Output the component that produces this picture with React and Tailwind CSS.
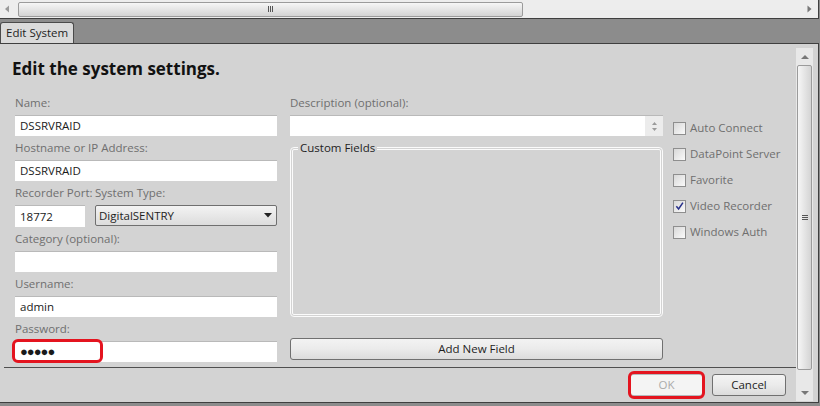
import React from 'react';

const labelCls = "h-[24px] flex items-center whitespace-nowrap text-[11.5px] text-[#6f6f6f] leading-none";
const inputCls = "h-[21px] bg-white border-t border-[#b9b9b9] flex items-center px-[5px] text-[11.5px] text-[#1a1a1a]";

const Field = ({ label, value, children, className = "" }) => (
  <div className={`flex flex-col ${className}`}>
    <div className={labelCls}>{label}</div>
    {children || <div className={inputCls}>{value}</div>}
  </div>
);

const Check = ({ label, checked }) => (
  <div className="h-[26px] flex items-center gap-[4px]">
    <div className="w-[13px] h-[13px] border border-[#8e8e8e] bg-gradient-to-br from-[#d8d8d8] to-[#fafafa] p-[1px] flex items-center justify-center">
      {checked && (
        <svg width="10" height="10" viewBox="0 0 10 10">
          <path d="M1.5 5.2 L4 8.2 L8.8 1.2" fill="none" stroke="#27308a" strokeWidth="1.7" />
        </svg>
      )}
    </div>
    <span className="text-[11.5px] text-[#6f6f6f]">{label}</span>
  </div>
);

const Btn = ({ children, disabled, className = "" }) => (
  <div
    className={`h-[22px] rounded-[3px] border flex items-center justify-center text-[11.5px] ${
      disabled
        ? "border-[#b5b9bc] bg-[#f4f4f4] text-[#ababab]"
        : "border-[#707070] bg-gradient-to-b from-[#f3f3f3] via-[#ebebeb] to-[#dcdcdc] text-[#1e1e1e]"
    } ${className}`}
  >
    {children}
  </div>
);

export default function App() {
  return (
    <div className="w-[820px] h-[406px] overflow-hidden bg-[#8c8c8c] flex flex-col font-['Open_Sans',sans-serif]">
      {/* horizontal scrollbar */}
      <div className="h-[19px] shrink-0 bg-[#ededed] border-b border-r border-[#3f3f3f] w-[819px] flex items-center pl-[4px] pr-[6px]">
        <svg width="6" height="8" viewBox="0 0 6 8" className="mr-[8px]">
          <path d="M5 0.5 L1 4 L5 7.5 Z" fill="#9a9a9a" />
        </svg>
        <div className="w-[505px] h-[15px] rounded-[2px] border border-[#9b9b9b] bg-gradient-to-b from-[#f6f6f6] to-[#d4d4d4] flex items-center justify-center">
          <div className="flex gap-[1px]">
            <div className="w-[1px] h-[6px] bg-[#555]" />
            <div className="w-[1px] h-[6px] bg-[#555]" />
            <div className="w-[1px] h-[6px] bg-[#555]" />
          </div>
        </div>
        <div className="flex-1" />
        <svg width="5" height="8" viewBox="0 0 5 8">
          <path d="M0.5 0.5 L4.5 4 L0.5 7.5 Z" fill="#777" />
        </svg>
      </div>

      {/* tab band */}
      <div className="h-[24px] shrink-0 flex items-end">
        <div className="w-[74px] h-[21px] bg-[#dadada] border border-b-0 border-[#4a4a4a] rounded-t-[3px] flex items-center pl-[5px] text-[11.5px] text-[#1e1e1e]">
          Edit System
        </div>
      </div>

      {/* panel */}
      <div className="h-[360px] shrink-0 w-[819px] bg-[#d3d3d3] border-t border-r border-b border-[#3f3f3f] flex">
        <div className="w-[796px] flex flex-col">
          <div className="h-[324px] border-b border-[#4f4f4f] ml-[4px] pl-[8px] flex flex-col">
            <div className="h-[47px] pt-[13px] text-[17px] font-bold text-[#111] leading-[23px]">
              Edit the system settings.
            </div>
            <div className="flex">
              {/* left column */}
              <div className="w-[262px] ml-[3px] flex flex-col">
                <Field label="Name:" value="DSSRVRAID" />
                <Field label="Hostname or IP Address:" value="DSSRVRAID" />
                <div className="flex">
                  <Field label="Recorder Port:" className="w-[70px]">
                    <div className={`${inputCls} h-[22px]`}>18772</div>
                  </Field>
                  <div className="ml-[10px] flex-1">
                    <Field label="System Type:">
                      <div className="h-[21px] rounded-[2px] border border-[#6f6f6f] bg-gradient-to-b from-[#f3f3f3] to-[#dcdcdc] flex items-center pl-[3px] pr-[4px] text-[11.5px] text-[#1e1e1e]">
                        <span className="flex-1">DigitalSENTRY</span>
                        <svg width="8" height="5" viewBox="0 0 8 5">
                          <path d="M0 0 L8 0 L4 4.5 Z" fill="#222" />
                        </svg>
                      </div>
                    </Field>
                  </div>
                </div>
                <Field label="Category (optional):" value="" />
                <Field label="Username:" value="admin" />
                <Field label="Password:">
                  <div className="relative">
                    <div className={`${inputCls} text-[13px] tracking-[-1px]`}>●●●●●</div>
                    <div className="absolute left-[-3px] top-[-2px] w-[91px] h-[24px] border-[3px] border-[#e4141f] rounded-[6px]" />
                  </div>
                </Field>
              </div>

              {/* middle column */}
              <div className="w-[373px] ml-[13px] flex flex-col">
                <Field label="Description (optional):">
                  <div className="h-[21px] bg-white border-t border-[#b9b9b9] flex">
                    <div className="flex-1" />
                    <div className="w-[18px] bg-[#ececec] flex flex-col items-center justify-center gap-[3px]">
                      <svg width="5" height="3" viewBox="0 0 5 3"><path d="M0 3 L2.5 0 L5 3 Z" fill="#9a9a9a" /></svg>
                      <svg width="5" height="3" viewBox="0 0 5 3"><path d="M0 0 L2.5 3 L5 0 Z" fill="#9a9a9a" /></svg>
                    </div>
                  </div>
                </Field>
                <fieldset className="mt-[5px] h-[176px] border-[3px] border-double border-[#fbfbfb] rounded-[4px] px-[5px]">
                  <legend className="px-[2px] text-[11.5px] text-[#1e1e1e] leading-[14px]">Custom Fields</legend>
                </fieldset>
                <Btn className="mt-[21px]">Add New Field</Btn>
              </div>

              {/* right column */}
              <div className="ml-[10px] pt-[24px] flex flex-col">
                <Check label="Auto Connect" />
                <Check label="DataPoint Server" />
                <Check label="Favorite" />
                <Check label="Video Recorder" checked />
                <Check label="Windows Auth" />
              </div>
            </div>
          </div>

          {/* footer */}
          <div className="flex-1 flex justify-end items-start pt-[6px] pr-[10px] gap-[9px]">
            <div className="relative">
              <Btn disabled className="w-[73px]">OK</Btn>
              <div className="absolute left-[-2px] top-[-3px] w-[77px] h-[28px] border-[3px] border-[#e4141f] rounded-[6px]" />
            </div>
            <Btn className="w-[74px]">Cancel</Btn>
          </div>
        </div>

        {/* vertical scrollbar */}
        <div className="w-[17px] mt-[4px] mb-[1px] bg-[#e8e8e8] flex flex-col items-center">
          <div className="h-[17px] flex items-center justify-center">
            <svg width="8" height="4" viewBox="0 0 8 4"><path d="M0 4 L4 0 L8 4 Z" fill="#777" /></svg>
          </div>
          <div className="w-[15px] h-[305px] rounded-[2px] border border-[#9b9b9b] bg-gradient-to-r from-[#f6f6f6] to-[#d4d4d4] flex items-center justify-center">
            <div className="flex flex-col gap-[1px]">
              <div className="w-[6px] h-[1px] bg-[#555]" />
              <div className="w-[6px] h-[1px] bg-[#555]" />
              <div className="w-[6px] h-[1px] bg-[#555]" />
            </div>
          </div>
          <div className="flex-1 flex items-end pb-[6px]">
            <svg width="8" height="4" viewBox="0 0 8 4"><path d="M0 0 L8 0 L4 4 Z" fill="#777" /></svg>
          </div>
        </div>
      </div>
    </div>
  );
}
